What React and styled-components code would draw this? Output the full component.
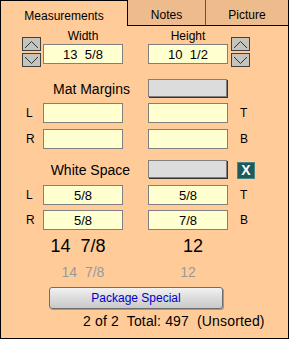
import React from 'react';
import styled, { createGlobalStyle } from 'styled-components';

const GlobalStyle = createGlobalStyle`
  html, body {
    margin: 0;
    padding: 0;
    background: #ffcc99;
  }
  body {
    font-family: "Liberation Sans", Arial, sans-serif;
  }
`;

const Window = styled.div`
  width: 289px;
  height: 339px;
  box-sizing: border-box;
  border-left: 1px solid #000;
  border-right: 1px solid #000;
  border-bottom: 1px solid #000;
  background: #ffcc99;
  color: #000;
  font-size: 12px;
`;

const TabBar = styled.div`
  display: flex;
  height: 26px;
`;

const Tab = styled.div`
  box-sizing: border-box;
  width: ${(p) => p.$width}px;
  height: 26px;
  padding-top: 4px;
  display: flex;
  align-items: center;
  justify-content: center;
  font-size: 12px;
  background: ${(p) => (p.$active ? '#ffcc99' : '#eebb8c')};
  border-top: ${(p) => (p.$active ? '1px solid #000' : 'none')};
  border-right: ${(p) => (p.$active ? '1px solid #000' : 'none')};
  border-bottom: ${(p) => (p.$active ? 'none' : '1px solid #000')};
  border-left: ${(p) => (p.$divider ? '1px solid #555' : 'none')};
`;

const Row = styled.div`
  display: grid;
  grid-template-columns: 42px 80px 25px 80px 1fr;
  margin-top: ${(p) => p.$top}px;
  height: ${(p) => p.$height}px;
  align-items: center;
`;

const Field = styled.div`
  display: flex;
  flex-direction: column;
  align-self: start;
  grid-column: ${(p) => p.$col};
`;

const FieldLabel = styled.div`
  height: 16px;
  line-height: 16px;
  text-align: center;
  font-size: 12px;
`;

const Input = styled.input`
  box-sizing: border-box;
  width: 80px;
  height: 20px;
  margin: 0;
  padding: 0;
  border: 1px solid #808080;
  background: #ffffd0;
  color: #000;
  font-family: "Liberation Sans", Arial, sans-serif;
  font-size: 13px;
  text-align: center;
  white-space: pre;
  outline: none;
  grid-column: ${(p) => p.$col};
`;

const Spinner = styled.div`
  grid-column: ${(p) => p.$col};
  align-self: start;
  margin-top: 9px;
  margin-left: ${(p) => p.$left}px;
  display: flex;
  flex-direction: column;
  gap: 2px;
`;

const SpinButton = styled.div`
  box-sizing: border-box;
  width: 19px;
  height: 14px;
  background: #c4c4bc;
  border: 1.5px solid #404040;
  display: flex;
  align-items: center;
  justify-content: center;

  svg {
    display: block;
  }
`;

const SectionLabel = styled.div`
  grid-column: 2 / 4;
  text-align: right;
  padding-right: 18px;
  font-size: 14px;
`;

const GrayButton = styled.div`
  grid-column: 4;
  box-sizing: border-box;
  width: 79px;
  height: 18px;
  align-self: start;
  background: #dcdcdc;
  border: 1px solid #808080;
  box-shadow: 1px 1px 0 #333;
`;

const ClearButton = styled.div`
  grid-column: 5;
  align-self: end;
  margin-left: 9px;
  box-sizing: border-box;
  width: 18px;
  height: 17px;
  background: #1c5b5b;
  border: 1px solid #4f8585;
  color: #fff;
  font-weight: bold;
  font-size: 14px;
  line-height: 15px;
  text-align: center;
`;

const SideLetter = styled.div`
  grid-column: ${(p) => p.$col};
  padding-left: ${(p) => p.$pad}px;
  font-size: 12px;
`;

const Total = styled.div`
  grid-column: ${(p) => p.$col};
  text-align: center;
  white-space: pre;
  font-size: ${(p) => (p.$faded ? 14 : 18)}px;
  color: ${(p) => (p.$faded ? '#999' : '#000')};
  padding-left: ${(p) => (p.$shift > 0 ? p.$shift : 0)}px;
  padding-right: ${(p) => (p.$shift < 0 ? -p.$shift : 0)}px;
`;

const PackageButton = styled.button`
  display: block;
  box-sizing: border-box;
  margin: 7px 0 0 48px;
  width: 174px;
  height: 22px;
  padding: 0;
  border: 1px solid #6e6e6e;
  border-radius: 3px;
  background: linear-gradient(#f2f2f2 0%, #dedede 45%, #c9c9c9 100%);
  box-shadow: 1px 1px 0 #9a9a9a;
  color: #0000cc;
  font-family: "Liberation Sans", Arial, sans-serif;
  font-size: 12px;
`;

const Status = styled.div`
  margin-top: 4px;
  padding-left: 82px;
  height: 16px;
  line-height: 16px;
  font-size: 14px;
  letter-spacing: 0.15px;
  white-space: pre;
`;

const Chevron = ({ up }) => (
  <svg width="15" height="9" viewBox="0 0 15 9">
    <polyline
      points={up ? '1,8 7.5,1.5 14,8' : '1,1 7.5,7.5 14,1'}
      fill="none"
      stroke="#333"
      strokeWidth="1"
    />
  </svg>
);

const SpinPair = ({ col, left }) => (
  <Spinner $col={col} $left={left}>
    <SpinButton>
      <Chevron up />
    </SpinButton>
    <SpinButton>
      <Chevron />
    </SpinButton>
  </Spinner>
);

const EntryRow = ({ top, side1, side2, left = '', right = '' }) => (
  <Row $top={top} $height={20}>
    <SideLetter $col={1} $pad={25}>{side1}</SideLetter>
    <Input $col={2} readOnly value={left} />
    <Input $col={4} readOnly value={right} />
    <SideLetter $col={5} $pad={12}>{side2}</SideLetter>
  </Row>
);

export default function App() {
  return (
    <>
      <GlobalStyle />
      <Window>
        <TabBar>
          <Tab $active $width={127}>Measurements</Tab>
          <Tab $width={77}>Notes</Tab>
          <Tab $width={83} $divider>Picture</Tab>
        </TabBar>

        <Row $top={2} $height={39}>
          <SpinPair col={1} left={21} />
          <Field $col={2}>
            <FieldLabel>Width</FieldLabel>
            <Input readOnly value="13  5/8" />
          </Field>
          <Field $col={4}>
            <FieldLabel>Height</FieldLabel>
            <Input readOnly value="10  1/2" />
          </Field>
          <SpinPair col={5} left={3} />
        </Row>

        <Row $top={12} $height={19}>
          <SectionLabel>Mat Margins</SectionLabel>
          <GrayButton />
        </Row>
        <EntryRow top={5} side1="L" side2="T" />
        <EntryRow top={6} side1="R" side2="B" />

        <Row $top={11} $height={19}>
          <SectionLabel>White Space</SectionLabel>
          <GrayButton />
          <ClearButton>X</ClearButton>
        </Row>
        <EntryRow top={6} side1="L" side2="T" left="5/8" right="5/8" />
        <EntryRow top={5} side1="R" side2="B" left="5/8" right="7/8" />

        <Row $top={6} $height={20}>
          <Total $col={2} $shift={-10}>14  7/8</Total>
          <Total $col={4} $shift={10}>12</Total>
        </Row>
        <Row $top={8} $height={16}>
          <Total $col={2} $faded>14  7/8</Total>
          <Total $col={4} $faded>12</Total>
        </Row>

        <PackageButton>Package Special</PackageButton>
        <Status>2 of 2  Total: 497  (Unsorted)</Status>
      </Window>
    </>
  );
}
